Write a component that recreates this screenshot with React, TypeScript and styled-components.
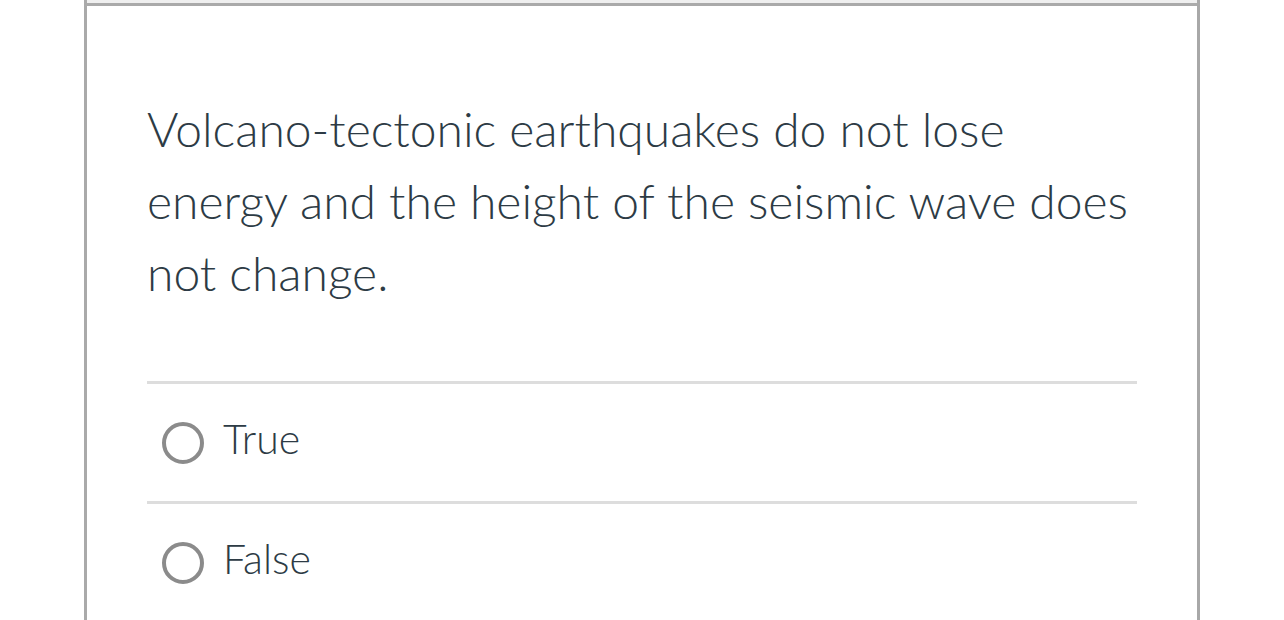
import React, { useState } from 'react';
import styled, { createGlobalStyle } from 'styled-components';

const GlobalStyle = createGlobalStyle`
  html, body {
    margin: 0;
    padding: 0;
    background: #ffffff;
    font-family: Lato, "Open Sans", "Liberation Sans", sans-serif;
  }
`;

const answers = ['True', 'False'];

const App: React.FC = () => {
  const [selected, setSelected] = useState<string | null>(null);

  return (
    <>
      <GlobalStyle />
      <Page>
        <Card>
          <CardHeader />
          <QuestionBody>
            <QuestionText>
              Volcano-tectonic earthquakes do not lose energy and the height of the
              seismic wave does not change.
            </QuestionText>
            <AnswerList>
              {answers.map((answer) => (
                <AnswerRow key={answer} onClick={() => setSelected(answer)}>
                  <Radio $checked={selected === answer} />
                  <AnswerLabel>{answer}</AnswerLabel>
                </AnswerRow>
              ))}
            </AnswerList>
          </QuestionBody>
        </Card>
      </Page>
    </>
  );
};

const Page = styled.div`
  padding: 0 84px;
  height: 620px;
  overflow: hidden;
`;

const Card = styled.div`
  border-left: 3px solid #aaaaaa;
  border-right: 3px solid #a8a8a8;
  min-height: 700px;
`;

const CardHeader = styled.div`
  height: 3px;
  background: #efefef;
  border-bottom: 3px solid #aaaaaa;
`;

const QuestionBody = styled.div`
  padding: 87px 60px 0;
`;

const QuestionText = styled.p`
  margin: 0 0 72px;
  font-size: 48px;
  font-weight: 300;
  line-height: 72px;
  color: #2d3b45;
`;

const AnswerList = styled.div`
  display: flex;
  flex-direction: column;
`;

const AnswerRow = styled.label`
  display: flex;
  align-items: center;
  gap: 19px;
  height: 117px;
  padding-left: 15px;
  border-top: 3px solid #dddddd;
  cursor: pointer;
`;

const Radio = styled.span<{ $checked: boolean }>`
  box-sizing: border-box;
  width: 42px;
  height: 42px;
  border-radius: 50%;
  border: 4px solid #8b8b8b;
  background: ${({ $checked }) => ($checked ? 'radial-gradient(circle, #2d3b45 40%, transparent 42%)' : '#ffffff')};
  flex-shrink: 0;
`;

const AnswerLabel = styled.span`
  font-size: 41px;
  font-weight: 300;
  color: #2d3b45;
  line-height: 1;
  margin-bottom: 8px;
`;

export default App;
